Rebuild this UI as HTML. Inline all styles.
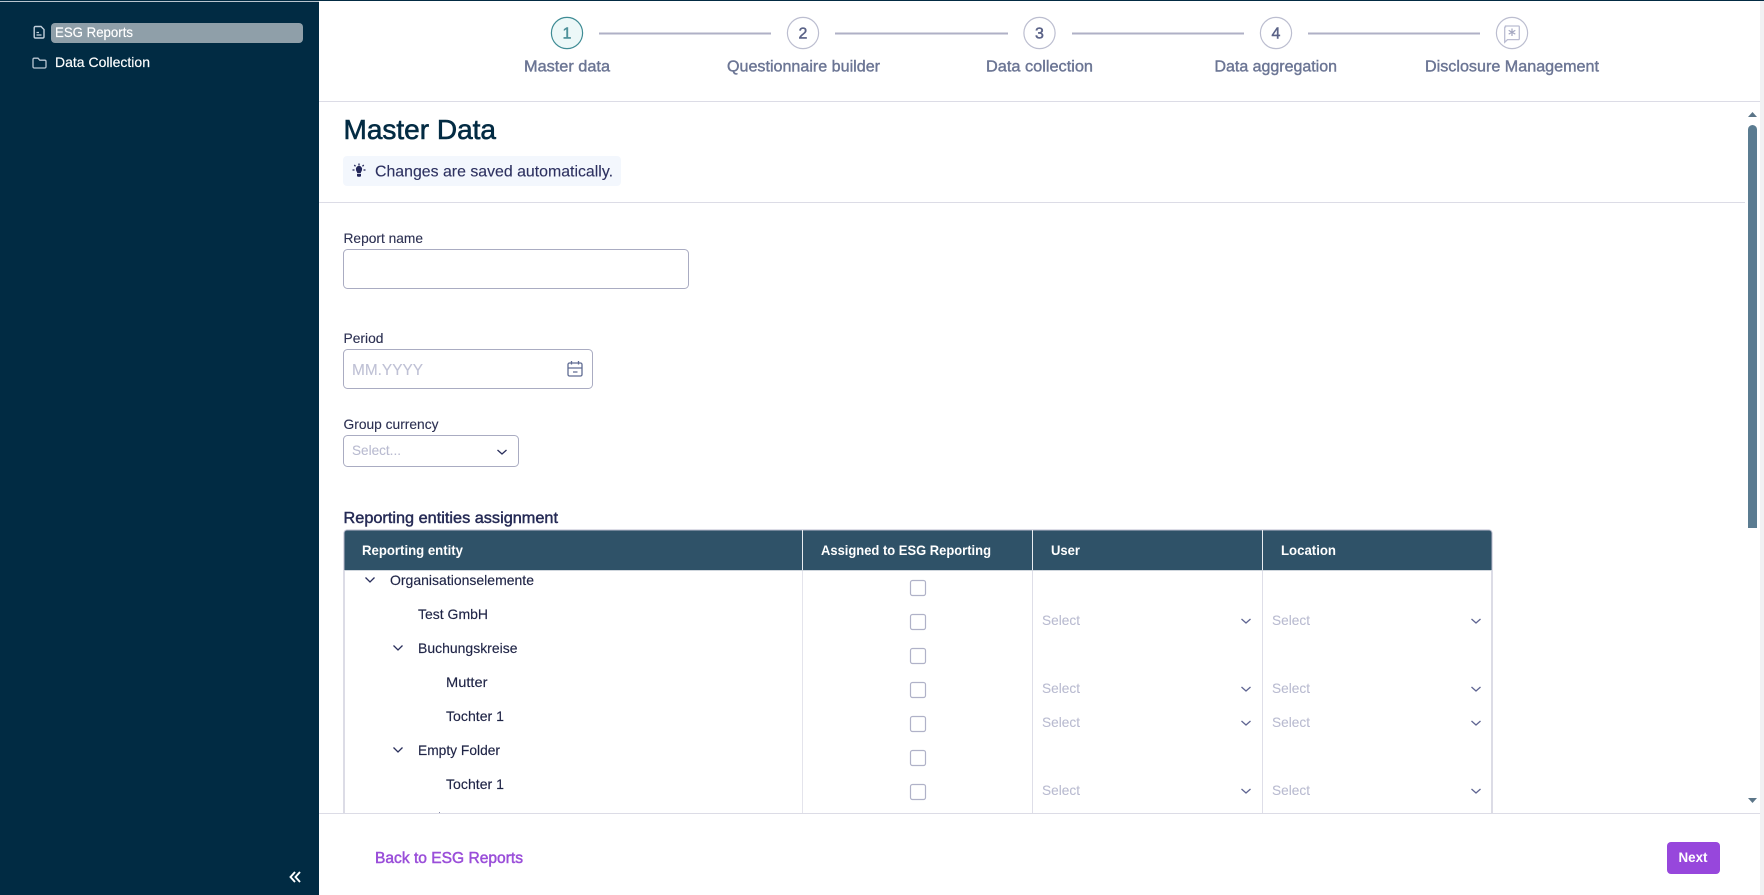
<!DOCTYPE html>
<html lang="en"><head><meta charset="utf-8"><title>Master Data</title>
<style>
html,body{margin:0;padding:0;width:1764px;height:895px;overflow:hidden;background:#fff}
svg{display:block}
text{font-family:"Liberation Sans",Arial,sans-serif;white-space:pre}
.n{font-size:14px;fill:#fff;stroke:#fff;stroke-width:.15}
.st{font-size:16px;fill:#6b7594;stroke:#6b7594;stroke-width:.4}
.num{font-size:16px;fill:#5a6287;text-anchor:middle;stroke:#5a6287;stroke-width:.45}
.lb{font-size:14px;fill:#2c3052;stroke:#2c3052;stroke-width:.12}
.ph{font-size:14px;fill:#b9bbd0;stroke:#b9bbd0;stroke-width:.1}
.th{font-size:14px;font-weight:700;fill:#fff}
.td{font-size:14px;fill:#1f2446;stroke:#1f2446;stroke-width:.15}
.box{fill:#fff;stroke:#aaacc2;stroke-width:1}
.chev{fill:none;stroke:#2a2f5c;stroke-width:1.3}
.chev2{fill:none;stroke:#5f6592;stroke-width:1.3}
.cb{fill:#fff;stroke:#b0b2c8;stroke-width:1.2}
.circ{fill:#fff;stroke:#bcbed0;stroke-width:1.2}
.ln{stroke:#afb0c6;stroke-width:2}
</style></head>
<body>
<svg width="1764" height="895" viewBox="0 0 1764 895" xmlns="http://www.w3.org/2000/svg">
<!-- page base -->
<rect x="0" y="0" width="1764" height="895" fill="#fff"/>
<rect x="1760" y="0" width="4" height="895" fill="#f1f1f3"/>
<rect x="0" y="0" width="1764" height="1" fill="#032b43"/>

<!-- sidebar -->
<rect x="0" y="0" width="319" height="895" fill="#012b43"/>
<rect x="0" y="1" width="319" height="1" fill="#b9c5cf"/>
<rect x="51" y="23" width="252" height="20" rx="4" fill="#8f9fa9"/>
<path d="M35.5 26.5h5.5l3 3v7.2a1.3 1.3 0 0 1-1.3 1.3h-7.200a1.3 1.3 0 0 1-1.3-1.3v-8.900a1.3 1.3 0 0 1 1.3-1.3z" fill="none" stroke="#c3d0dc" stroke-width="1.4"/>
<path d="M36.5 32.500h2.5M36.5 35h5" stroke="#c3d0dc" stroke-width="1.2" fill="none"/>
<text class="n" x="55" y="37" textLength="78" lengthAdjust="spacingAndGlyphs">ESG Reports</text>
<path d="M33 59.500a1.3 1.3 0 0 1 1.3-1.3h3.700l1.800 2h4.900a1.3 1.3 0 0 1 1.3 1.3v5.200a1.3 1.3 0 0 1-1.3 1.3H34.300a1.3 1.3 0 0 1-1.3-1.3z" fill="none" stroke="#b9c6d2" stroke-width="1.3"/>
<text class="n" x="55" y="67" textLength="95" lengthAdjust="spacingAndGlyphs">Data Collection</text>
<path d="M295 872l-4.500 5 4.500 5M300 872l-4.500 5 4.500 5" fill="none" stroke="#fff" stroke-width="1.9"/>

<!-- stepper -->
<line class="ln" x1="599" y1="33.500" x2="771" y2="33.500"/>
<line class="ln" x1="835" y1="33.500" x2="1008" y2="33.500"/>
<line class="ln" x1="1072" y1="33.500" x2="1244" y2="33.500"/>
<line class="ln" x1="1308" y1="33.500" x2="1480" y2="33.500"/>
<circle cx="567" cy="33" r="15.600" fill="#ecf8f8" stroke="#3f8c95" stroke-width="1.2"/>
<circle class="circ" cx="803" cy="33" r="15.600"/>
<circle class="circ" cx="1039.500" cy="33" r="15.600"/>
<circle class="circ" cx="1276" cy="33" r="15.600"/>
<circle class="circ" cx="1512" cy="33" r="15.600"/>
<text class="num" x="567" y="38.500" style="fill:#4b8f98;stroke:#4b8f98">1</text>
<text class="num" x="803" y="38.500">2</text>
<text class="num" x="1039.500" y="38.500">3</text>
<text class="num" x="1276" y="38.500">4</text>
<path d="M1505.500 26h13a.8.8 0 0 1 .8.8v12a.8.8 0 0 1-.8.8h-11l-2.800 2.600v-14.600a.8.8 0 0 1 .8-.8z" fill="none" stroke="#bbbdd2" stroke-width="1.3"/>
<path d="M1512 28.500v7.500M1508.700 30.400l6.600 3.700M1515.300 30.400l-6.600 3.700" fill="none" stroke="#a3a6c0" stroke-width="1.200"/>
<text class="st" x="524" y="71.500" textLength="86" lengthAdjust="spacingAndGlyphs">Master data</text>
<text class="st" x="727" y="71.500" textLength="153" lengthAdjust="spacingAndGlyphs">Questionnaire builder</text>
<text class="st" x="986" y="71.500" textLength="107" lengthAdjust="spacingAndGlyphs">Data collection</text>
<text class="st" x="1214.500" y="71.500" textLength="122.500" lengthAdjust="spacingAndGlyphs">Data aggregation</text>
<text class="st" x="1425" y="71.500" textLength="174" lengthAdjust="spacingAndGlyphs">Disclosure Management</text>
<rect x="319" y="101" width="1441" height="1" fill="#dcdce6"/>

<!-- title block -->
<text x="343.500" y="139" font-size="28" fill="#032b43" stroke="#032b43" stroke-width=".6" textLength="152.500" lengthAdjust="spacingAndGlyphs">Master Data</text>
<rect x="343" y="156" width="278" height="30" rx="4" fill="#f3f7fd"/>
<path d="M356 169.800a3.100 3.100 0 1 1 6 0c0 1.300-1 1.900-1.300 3.400h-3.400c-.3-1.500-1.300-2.100-1.300-3.400zM357 174h4v2l-.7.8h-2.600l-.7-.8z" fill="#23275a"/>
<path d="M359 163.500v2M354.300 165l1.200 1.300M363.700 165l-1.200 1.300M352.500 170h2M363.500 170h2" stroke="#23275a" stroke-width="1.3" fill="none"/>
<text x="375" y="176.500" font-size="16" fill="#2d3160" stroke="#2d3160" stroke-width=".12" textLength="238" lengthAdjust="spacingAndGlyphs">Changes are saved automatically.</text>
<rect x="319" y="202" width="1426" height="1" fill="#dcdce6"/>

<!-- form -->
<text class="lb" x="343.500" y="243" textLength="79.500" lengthAdjust="spacingAndGlyphs">Report name</text>
<rect class="box" x="343.500" y="249.500" width="345" height="39" rx="4"/>
<text class="lb" x="343.500" y="343" textLength="40" lengthAdjust="spacingAndGlyphs">Period</text>
<rect class="box" x="343.500" y="349.500" width="249" height="39" rx="4"/>
<text x="352" y="375" font-size="16" fill="#bfc1d5" stroke="#bfc1d5" stroke-width=".12" textLength="71" lengthAdjust="spacingAndGlyphs">MM.YYYY</text>
<path d="M569.500 363h11a1.500 1.500 0 0 1 1.500 1.500v10a1.500 1.500 0 0 1-1.500 1.500h-11a1.500 1.500 0 0 1-1.500-1.500v-10a1.500 1.500 0 0 1 1.500-1.500zM568 368h14M571.500 361v3.500M578.500 361v3.500M573 372h4.500" fill="none" stroke="#5f6b92" stroke-width="1.3"/>
<text class="lb" x="343.500" y="429" textLength="95" lengthAdjust="spacingAndGlyphs">Group currency</text>
<rect class="box" x="343.500" y="435.500" width="175" height="31" rx="4"/>
<text class="ph" x="352" y="455" textLength="49" lengthAdjust="spacingAndGlyphs">Select...</text>
<path class="chev" d="M497.500 450l4.500 4 4.500-4"/>
<text x="343.500" y="523" font-size="16" fill="#252a55" stroke="#252a55" stroke-width=".45" textLength="214.500" lengthAdjust="spacingAndGlyphs">Reporting entities assignment</text>

<!-- table -->
<path d="M344 813V533a3 3 0 0 1 3-3h1142a3 3 0 0 1 3 3v280" fill="#fff" stroke="#b8bacd" stroke-width="1"/>
<path d="M344.500 570V533a2.500 2.500 0 0 1 2.500-2.500h1142a2.500 2.500 0 0 1 2.500 2.500v37z" fill="#2f5268"/>
<rect x="344" y="570" width="1148" height="1" fill="#cfd6dd"/>
<line x1="802.500" y1="530" x2="802.500" y2="570" stroke="#e8ecf0"/>
<line x1="1032.500" y1="530" x2="1032.500" y2="570" stroke="#e8ecf0"/>
<line x1="1262.500" y1="530" x2="1262.500" y2="570" stroke="#e8ecf0"/>
<line x1="802.500" y1="571" x2="802.500" y2="813" stroke="#e4e4ec"/>
<line x1="1032.500" y1="571" x2="1032.500" y2="813" stroke="#dedee8"/>
<line x1="1262.500" y1="571" x2="1262.500" y2="813" stroke="#dedee8"/>
<text class="th" x="362" y="555" textLength="101" lengthAdjust="spacingAndGlyphs">Reporting entity</text>
<text class="th" x="821" y="555" textLength="170" lengthAdjust="spacingAndGlyphs">Assigned to ESG Reporting</text>
<text class="th" x="1051" y="555" textLength="29" lengthAdjust="spacingAndGlyphs">User</text>
<text class="th" x="1281" y="555" textLength="55" lengthAdjust="spacingAndGlyphs">Location</text>

<path class="chev" d="M365.500 577.500l4.500 4.500 4.500-4.500"/>
<path class="chev" d="M393.500 645.500l4.500 4.500 4.500-4.500"/>
<path class="chev" d="M393.500 747.500l4.500 4.500 4.500-4.500"/>
<text class="td" x="390" y="585" textLength="144" lengthAdjust="spacingAndGlyphs">Organisationselemente</text>
<text class="td" x="418" y="619" textLength="70" lengthAdjust="spacingAndGlyphs">Test GmbH</text>
<text class="td" x="418" y="653" textLength="99.500" lengthAdjust="spacingAndGlyphs">Buchungskreise</text>
<text class="td" x="446" y="687" textLength="41.500" lengthAdjust="spacingAndGlyphs">Mutter</text>
<text class="td" x="446" y="721" textLength="58" lengthAdjust="spacingAndGlyphs">Tochter 1</text>
<text class="td" x="418" y="755" textLength="82" lengthAdjust="spacingAndGlyphs">Empty Folder</text>
<text class="td" x="446" y="789" textLength="58" lengthAdjust="spacingAndGlyphs">Tochter 1</text>
<rect x="439" y="812" width="1" height="1" fill="#8a8ca8"/>

<rect class="cb" x="910.500" y="580.500" width="15" height="15" rx="2"/>
<rect class="cb" x="910.500" y="614.500" width="15" height="15" rx="2"/>
<rect class="cb" x="910.500" y="648.500" width="15" height="15" rx="2"/>
<rect class="cb" x="910.500" y="682.500" width="15" height="15" rx="2"/>
<rect class="cb" x="910.500" y="716.500" width="15" height="15" rx="2"/>
<rect class="cb" x="910.500" y="750.500" width="15" height="15" rx="2"/>
<rect class="cb" x="910.500" y="784.500" width="15" height="15" rx="2"/>

<text class="ph" x="1042" y="625" textLength="38" lengthAdjust="spacingAndGlyphs">Select</text>
<text class="ph" x="1272" y="625" textLength="38" lengthAdjust="spacingAndGlyphs">Select</text>
<text class="ph" x="1042" y="693" textLength="38" lengthAdjust="spacingAndGlyphs">Select</text>
<text class="ph" x="1272" y="693" textLength="38" lengthAdjust="spacingAndGlyphs">Select</text>
<text class="ph" x="1042" y="727" textLength="38" lengthAdjust="spacingAndGlyphs">Select</text>
<text class="ph" x="1272" y="727" textLength="38" lengthAdjust="spacingAndGlyphs">Select</text>
<text class="ph" x="1042" y="795" textLength="38" lengthAdjust="spacingAndGlyphs">Select</text>
<text class="ph" x="1272" y="795" textLength="38" lengthAdjust="spacingAndGlyphs">Select</text>
<path class="chev2" d="M1241.500 619l4.500 4 4.500-4M1471.500 619l4.500 4 4.500-4M1241.500 687l4.500 4 4.500-4M1471.500 687l4.500 4 4.500-4M1241.500 721l4.500 4 4.500-4M1471.500 721l4.500 4 4.500-4M1241.500 789l4.500 4 4.500-4M1471.500 789l4.500 4 4.500-4"/>

<!-- scrollbar -->
<path d="M1748 117l4.500-5 4.500 5z" fill="#5b7588"/>
<path d="M1748 528V129.500a4.500 4.500 0 0 1 9 0V528z" fill="#5b7c91"/>
<path d="M1748 798l4.500 5 4.500-5z" fill="#5b7588"/>

<!-- footer -->
<rect x="319" y="813" width="1441" height="82" fill="#fff"/>
<rect x="319" y="813" width="1441" height="1" fill="#dcdce6"/>
<text x="375" y="863" font-size="16" fill="#9a4ed9" stroke="#9a4ed9" stroke-width=".5" textLength="148" lengthAdjust="spacingAndGlyphs">Back to ESG Reports</text>
<rect x="1667" y="842" width="53" height="32" rx="4" fill="#9747dc"/>
<text x="1678.500" y="862" font-size="14" font-weight="700" fill="#fff" textLength="29" lengthAdjust="spacingAndGlyphs">Next</text>
</svg>
</body></html>
